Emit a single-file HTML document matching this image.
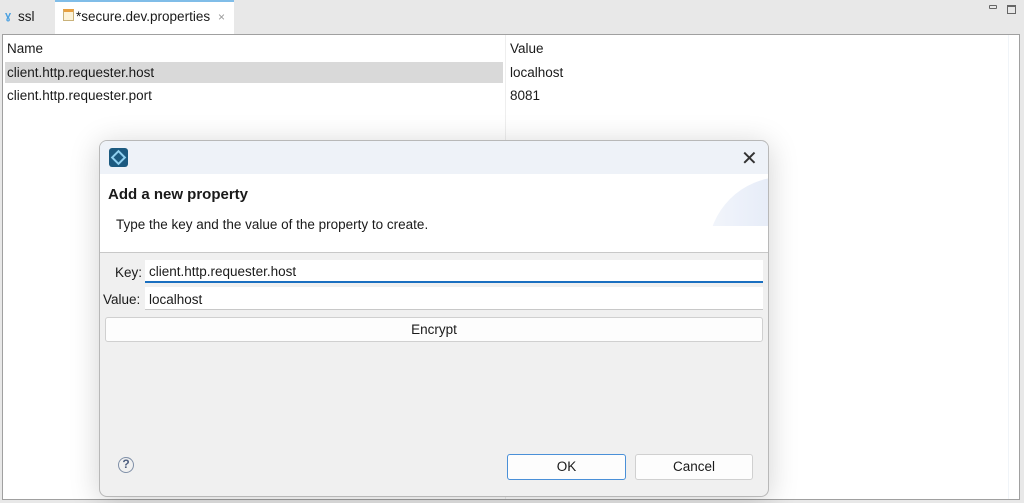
<!DOCTYPE html>
<html><head><style>
*{margin:0;padding:0;box-sizing:border-box}
body{width:1024px;height:503px;background:#e8e8e8;font-family:"Liberation Sans",sans-serif;font-size:13.5px;color:#1a1a1a;position:relative;overflow:hidden}
.abs{position:absolute}
.tabsel{left:55px;top:0;width:179px;height:34px;background:#fff;border-top:2px solid #80bde8}
.content{left:2px;top:34px;width:1018px;height:466px;background:#fff;border:1px solid #a0a0a0}
.dlg{left:99px;top:140px;width:670px;height:357px;background:#f0f0f0;border:1px solid #b8b8b8;border-radius:8px;overflow:hidden;box-shadow:0 4px 30px rgba(0,0,0,.18)}
.inp{background:#fff;border-bottom:1px solid #c8c8c8;height:23px}
.btn{background:#fdfdfd;border:1px solid #d0d0d0;border-radius:3px;text-align:center;line-height:24px}
</style></head><body>
<div class="abs" style="left:5px;top:10px;width:10px;height:11px;color:#4aa0e0;font-size:11px;font-weight:bold">ɣ</div>
<div class="abs" style="left:18px;top:9px">ssl</div>
<div class="abs tabsel"></div>
<div class="abs" style="left:63px;top:9px;width:11px;height:12px;background:#fdf3d8;border:1px solid #c9b27a;border-top:3px solid #e8a040"></div>
<div class="abs" style="left:76px;top:9px">*secure.dev.properties</div>
<div class="abs" style="left:218px;top:10px;color:#999;font-size:12px">×</div>
<div class="abs" style="left:989px;top:5px;width:8px;height:4px;border:1px solid #666;border-radius:1px"></div>
<div class="abs" style="left:1007px;top:5px;width:9px;height:9px;border:1px solid #666;border-top-width:2px"></div>
<div class="abs content"></div>
<div class="abs" style="left:505px;top:35px;width:1px;height:464px;background:#eee"></div>
<div class="abs" style="left:1008px;top:35px;width:1px;height:464px;background:#f0f4f8"></div>
<div class="abs" style="left:7px;top:41px">Name</div>
<div class="abs" style="left:510px;top:41px">Value</div>
<div class="abs" style="left:5px;top:62px;width:498px;height:21px;background:#d9d9d9"></div>
<div class="abs" style="left:7px;top:65px">client.http.requester.host</div>
<div class="abs" style="left:510px;top:65px">localhost</div>
<div class="abs" style="left:7px;top:88px">client.http.requester.port</div>
<div class="abs" style="left:510px;top:88px">8081</div>
<div class="abs dlg">
 <div class="abs" style="left:0;top:0;width:670px;height:33px;background:#eef2f8"></div>
 <div class="abs" style="left:9px;top:7px;width:19px;height:19px;background:#1c5a80;border-radius:3px"><div style="margin:4px;width:11px;height:11px;border:2px solid #8fd0f0;transform:rotate(45deg)"></div></div>
 <div class="abs" style="left:641px;top:5px;font-size:20px;color:#333">✕</div>
 <div class="abs" style="left:0;top:33px;width:670px;height:79px;background:#fff;border-bottom:1px solid #c8c8c8;overflow:hidden">
  <div class="abs" style="left:608px;top:3px;width:150px;height:150px;border-radius:50%;background:linear-gradient(90deg,#f2f5fb,#d6e0f4)"></div>
  <div class="abs" style="left:0;top:52px;width:670px;height:40px;background:#fff"></div>
 </div>
 <div class="abs" style="left:8px;top:45px;font-weight:bold;font-size:15px">Add a new property</div>
 <div class="abs" style="left:16px;top:76px">Type the key and the value of the property to create.</div>
 <div class="abs" style="left:15px;top:124px">Key:</div>
 <div class="abs inp" style="left:45px;top:119px;width:618px;border-bottom:2px solid #1a6fc0"></div>
 <div class="abs" style="left:49px;top:123px">client.http.requester.host</div>
 <div class="abs" style="left:3px;top:151px">Value:</div>
 <div class="abs inp" style="left:45px;top:146px;width:618px"></div>
 <div class="abs" style="left:49px;top:151px">localhost</div>
 <div class="abs btn" style="left:5px;top:176px;width:658px;height:25px">Encrypt</div>
 <div class="abs" style="left:18px;top:316px;width:16px;height:16px;border:1.5px solid #8090a8;border-radius:50%;text-align:center;font-size:12px;line-height:13px;color:#506080;font-weight:bold">?</div>
 <div class="abs btn" style="left:407px;top:313px;width:119px;height:26px;border-color:#4a90d8">OK</div>
 <div class="abs btn" style="left:535px;top:313px;width:118px;height:26px">Cancel</div>
</div>
</body></html>
